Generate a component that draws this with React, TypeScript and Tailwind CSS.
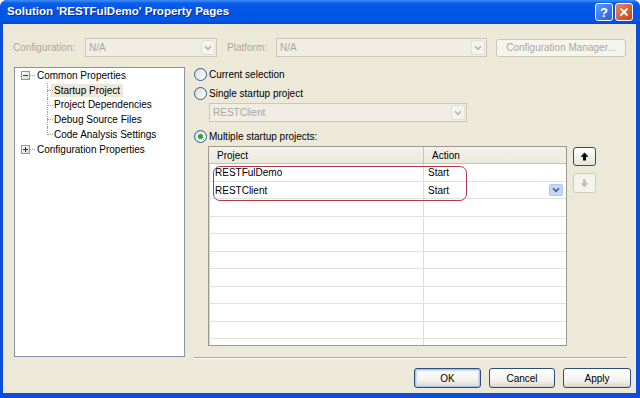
import React from 'react';

const Chevron = ({ color = '#b8b6a8' }: { color?: string }) => (
  <svg viewBox="0 0 8 6" className="w-[8px] h-[6px]">
    <path d="M1 1.2 4 4.4 7 1.2" fill="none" stroke={color} strokeWidth="1.6" />
  </svg>
);

const Combo = ({ text, className }: { text: string; className: string }) => (
  <div className={`h-[19px] border border-[#cbc8b9] bg-[#efede4] flex items-center ${className}`}>
    <span className="flex-1 pl-[3px] text-[#aca899]">{text}</span>
    <span className="w-[14px] h-[15px] mr-[1px] rounded-[2px] border border-[#e2e0d5] bg-[#f4f3ee] flex items-center justify-center">
      <Chevron />
    </span>
  </div>
);

const Radio = ({ label, checked }: { label: string; checked?: boolean }) => (
  <div className="flex items-center h-[14px]">
    <span className="w-[13px] h-[13px] rounded-full border border-[#2c5d8e] bg-[linear-gradient(135deg,#dcdbd3,#ffffff)] flex items-center justify-center">
      {checked && <span className="w-[5px] h-[5px] rounded-full bg-[#2aa52a]" />}
    </span>
    <span className="ml-[2px]">{label}</span>
  </div>
);

const TreeBox = ({ plus }: { plus?: boolean }) => (
  <span className="relative ml-[6px] w-[9px] h-[9px] border border-[#8a99ad] bg-[linear-gradient(135deg,#ffffff,#d8d6cc)] shrink-0">
    <span className="absolute left-[1px] top-[3px] w-[5px] h-[1px] bg-[#333]" />
    {plus && <span className="absolute left-[3px] top-[1px] w-[1px] h-[5px] bg-[#333]" />}
  </span>
);

const TreeRoot = ({ label, plus }: { label: string; plus?: boolean }) => (
  <div className="flex items-center h-[14.8px]">
    <TreeBox plus={plus} />
    <span className="w-[5px] border-t border-dotted border-[#a0a0a0]" />
    <span className="ml-[2px]">{label}</span>
  </div>
);

const TreeChild = ({ label, last, selected }: { label: string; last?: boolean; selected?: boolean }) => (
  <div className="flex items-center h-[14.8px]">
    <span className="relative ml-[32px] w-[6px] self-stretch">
      <span
        className={`absolute left-0 top-0 border-l border-dotted border-[#a0a0a0] ${last ? 'h-[8px]' : 'h-full'}`}
      />
      <span className="absolute left-0 top-[7px] w-[6px] border-t border-dotted border-[#a0a0a0]" />
    </span>
    <span className={`ml-[-2px] px-[3px] h-[13px] leading-[13px] ${selected ? 'bg-[#ece9d8]' : ''}`}>
      {label}
    </span>
  </div>
);

const XpButton = ({ label, w, primary }: { label: string; w: string; primary?: boolean }) => (
  <div
    className={`${w} h-[20px] rounded-[3px] border border-[#2b4d7a] bg-[linear-gradient(180deg,#ffffff_0%,#f4f3ee_60%,#dcd9cd_100%)] flex items-center justify-center ${
      primary ? 'shadow-[inset_0_0_0_1px_#a8c4ef,inset_0_0_0_2px_#cfdcf5]' : 'shadow-[inset_0_-1px_0_#d6d0c5]'
    }`}
  >
    {label}
  </div>
);

const ArrowIcon = ({ down, color }: { down?: boolean; color: string }) => (
  <svg viewBox="0 0 9 9" className={`w-[9px] h-[9px] ${down ? 'rotate-180' : ''}`}>
    <path d="M4.5 0.5 8.5 4.8H6V8.5H3V4.8H0.5Z" fill={color} />
  </svg>
);

export default function App() {
  const rows = Array.from({ length: 11 });
  return (
    <div className="w-[640px] h-[398px] flex flex-col bg-[#0b4fd8] rounded-t-[7px] overflow-hidden font-['Liberation_Sans',Arial,sans-serif] text-[10px] text-black">
      {/* Title bar */}
      <div className="h-[24px] shrink-0 flex items-center pl-[7px] pr-[7px] bg-[linear-gradient(180deg,#3d8ff8_0%,#0b5ce8_14%,#0054e3_55%,#0059ea_82%,#0846c8_100%)]">
        <span className="flex-1 text-white font-bold text-[11.5px] [text-shadow:1px_1px_0_#0a2c8a]">
          Solution 'RESTFulDemo' Property Pages
        </span>
        <span className="w-[18px] h-[18px] rounded-[3px] border border-white bg-[linear-gradient(135deg,#5d98f7,#2461dc)] flex items-center justify-center text-white font-bold text-[13px] leading-none">
          ?
        </span>
        <span className="ml-[2px] w-[18px] h-[18px] rounded-[3px] border border-white bg-[linear-gradient(135deg,#e9865e,#c7401a)] flex items-center justify-center">
          <svg viewBox="0 0 10 10" className="w-[10px] h-[10px]">
            <path d="M1.5 1.5 8.5 8.5M8.5 1.5 1.5 8.5" stroke="#fff" strokeWidth="1.8" />
          </svg>
        </span>
      </div>

      {/* Body */}
      <div className="flex-1 ml-[3px] mr-[4px] mb-[5px] bg-[#ece9d8] flex flex-col">
        {/* Configuration row */}
        <div className="mt-[14px] h-[19px] flex items-center ml-[10px]">
          <span className="w-[72px] text-[#aca899]">Configuration:</span>
          <Combo text="N/A" className="w-[132px]" />
          <span className="ml-[10px] w-[49px] text-[#aca899]">Platform:</span>
          <Combo text="N/A" className="w-[211px]" />
          <div className="ml-[9px] w-[130px] h-[18px] rounded-[3px] border border-[#c9c7ba] bg-[#f5f4ed] flex items-center justify-center text-[#aca899]">
            Configuration Manager...
          </div>
        </div>

        {/* Main area */}
        <div className="mt-[10px] h-[292px] flex">
          <div className="ml-[11px] w-[171px] h-[290px] border border-[#8593a6] bg-white">
            <TreeRoot label="Common Properties" />
            <TreeChild label="Startup Project" selected />
            <TreeChild label="Project Dependencies" />
            <TreeChild label="Debug Source Files" />
            <TreeChild label="Code Analysis Settings" last />
            <TreeRoot label="Configuration Properties" plus />
          </div>

          <div className="ml-[9px] w-[434px] flex flex-col">
            <Radio label="Current selection" />
            <div className="mt-[5px]">
              <Radio label="Single startup project" />
            </div>
            <Combo text="RESTClient" className="mt-[3px] ml-[15px] w-[258px]" />
            <div className="mt-[7px]">
              <Radio label="Multiple startup projects:" checked />
            </div>

            <div className="mt-[3px] flex">
              {/* Grid */}
              <div className="relative ml-[14px] w-[359px] h-[200px] border border-[#9c9a90] bg-white overflow-hidden shadow-[inset_1px_1px_0_#d6d3c6]">
                <div className="h-[17px] flex bg-[linear-gradient(180deg,#f2f1ea,#ebeadb)] border-b border-[#c5c2b2]">
                  <div className="w-[215px] border-r border-[#c7c4b6] pl-[8px] flex items-center">Project</div>
                  <div className="flex-1 pl-[8px] flex items-center">Action</div>
                </div>
                {rows.map((_, i) => (
                  <div key={i} className="h-[17.5px] flex border-b border-[#e2e1dc]">
                    <div className="w-[215px] border-r border-[#dcdbd6] pl-[6px] pt-[1px] flex items-center">
                      {i === 0 ? 'RESTFulDemo' : i === 1 ? 'RESTClient' : ''}
                    </div>
                    <div className="flex-1 pl-[4px] pr-[3px] pt-[1px] flex items-center justify-between">
                      <span>{i < 2 ? 'Start' : ''}</span>
                      {i === 1 && (
                        <span className="w-[14px] h-[12px] rounded-[2px] border border-[#b4c6ee] bg-[#c6d5fa] flex items-center justify-center">
                          <Chevron color="#3f5b92" />
                        </span>
                      )}
                    </div>
                  </div>
                ))}
                {/* highlight ring */}
                <div className="absolute left-[4px] top-[19px] w-[254px] h-[35px] rounded-[7px] border-[1.5px] border-[#b23a50]" />
              </div>

              <div className="ml-[6px] flex flex-col">
                <div className="mt-[1px] w-[23px] h-[19px] rounded-[3px] border border-[#2b4d7a] bg-[linear-gradient(180deg,#ffffff,#e6e4da)] flex items-center justify-center">
                  <ArrowIcon color="#000" />
                </div>
                <div className="mt-[7px] w-[23px] h-[20px] rounded-[3px] border border-[#cfcdc0] bg-[#f4f3ee] flex items-center justify-center">
                  <ArrowIcon down color="#c4c2b4" />
                </div>
              </div>
            </div>

            <div className="mt-auto h-[2px] w-[433px] border-t border-[#aca899] border-b border-b-white" />
          </div>
        </div>

        {/* Buttons */}
        <div className="mt-[9px] flex justify-end gap-[8px] pr-[5px]">
          <XpButton label="OK" w="w-[67px]" primary />
          <XpButton label="Cancel" w="w-[66px]" />
          <XpButton label="Apply" w="w-[68px]" />
        </div>
      </div>
    </div>
  );
}
